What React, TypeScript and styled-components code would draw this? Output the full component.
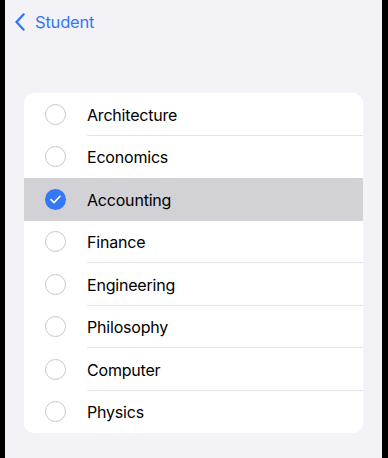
import React, { useState } from 'react';
import styled, { createGlobalStyle } from 'styled-components';

const GlobalStyle = createGlobalStyle`
    html, body {
        margin: 0;
        padding: 0;
        background: #000;
    }
    body {
        font-family: Inter, "Noto Sans", sans-serif;
        -webkit-font-smoothing: antialiased;
    }
`;

const Screen = styled.div`
    margin-left: 5px;
    width: 377px;
    height: 458px;
    background: #f2f2f7;
    box-sizing: border-box;
    padding: 0 19px;
    overflow: hidden;
`;

const NavBar = styled.div`
    height: 43px;
    display: flex;
    align-items: center;
    margin-left: -10px;
    gap: 9px;
    color: #3478f6;
    font-size: 16.5px;
    letter-spacing: -0.2px;
    cursor: pointer;
`;

const Card = styled.ul`
    list-style: none;
    margin: 50px 0 0;
    padding: 0;
    background: #fff;
    border-radius: 10px;
    overflow: hidden;
`;

const Row = styled.li<{ $selected: boolean }>`
    height: 42.5px;
    display: flex;
    align-items: center;
    padding-left: 21px;
    background: ${p => (p.$selected ? '#d1d1d6' : '#fff')};
    cursor: pointer;
`;

const Radio = styled.span<{ $checked: boolean }>`
    width: 21px;
    height: 21px;
    box-sizing: border-box;
    border-radius: 50%;
    border: ${p => (p.$checked ? 'none' : '1.5px solid #c7c7cc')};
    background: ${p => (p.$checked ? '#3478f6' : 'transparent')};
    display: flex;
    align-items: center;
    justify-content: center;
    flex-shrink: 0;
`;

const Label = styled.div<{ $last: boolean }>`
    flex: 1;
    height: 100%;
    display: flex;
    align-items: center;
    margin-left: 21px;
    padding-top: 1px;
    box-sizing: border-box;
    font-size: 16px;
    letter-spacing: -0.2px;
    color: #000;
    box-shadow: ${p => (p.$last ? 'none' : 'inset 0 -1px 0 #e3e3e6')};
`;

const subjects = [
    'Architecture',
    'Economics',
    'Accounting',
    'Finance',
    'Engineering',
    'Philosophy',
    'Computer',
    'Physics',
];

function App() {
    const [selected, setSelected] = useState('Accounting');

    return (
        <>
            <GlobalStyle />
            <Screen>
                <NavBar>
                    <svg width="12" height="18" viewBox="0 0 12 18" fill="none">
                        <path d="M9.5 1.5L2.5 9l7 7.5" stroke="#3478f6" strokeWidth="2.4" strokeLinecap="round" strokeLinejoin="round" />
                    </svg>
                    <span>Student</span>
                </NavBar>
                <Card>
                    {subjects.map((item, i) => {
                        const isSel = item === selected;
                        const nextSel = subjects[i + 1] === selected;
                        return (
                            <Row key={item} $selected={isSel} onClick={() => setSelected(item)}>
                                <Radio $checked={isSel}>
                                    {isSel && (
                                        <svg width="11" height="9" viewBox="0 0 11 9" fill="none">
                                            <path d="M1 4.6l3 3L10 1.3" stroke="#fff" strokeWidth="1.6" strokeLinecap="round" strokeLinejoin="round" />
                                        </svg>
                                    )}
                                </Radio>
                                <Label $last={i === subjects.length - 1 || isSel || nextSel}>{item}</Label>
                            </Row>
                        );
                    })}
                </Card>
            </Screen>
        </>
    );
}

export default App;
